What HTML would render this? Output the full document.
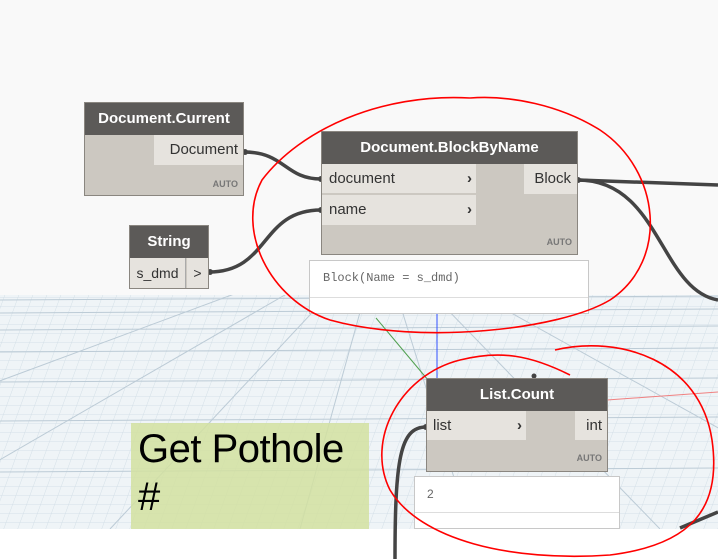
<!DOCTYPE html>
<html><head><style>
body{margin:0;width:718px;height:559px;overflow:hidden;background:#fff;font-family:"Liberation Sans",sans-serif;position:relative}
.a{position:absolute;box-sizing:border-box}
.node{background:#ccc8c1;border:1px solid #8a8680}
.hd{background:#5c5a58;color:#fff;font-weight:bold;font-size:15px;text-align:center}
.port{background:#e6e3de;color:#333;font-size:15px}
.auto{color:#777;font-size:9px;font-weight:bold}
.res{background:#fff;border:1px solid #c8c8c8}
</style></head><body>
<svg class="a" style="left:0;top:0" width="718" height="559">
<defs><clipPath id="g"><rect x="0" y="295" width="718" height="234"/></clipPath>
<pattern id="p" width="14" height="9" patternUnits="userSpaceOnUse" patternTransform="skewX(-20)"><path d="M0 0H14M0 0V9" stroke="#d3dfe7" stroke-width="1" fill="none"/></pattern></defs>
<rect x="0" y="0" width="718" height="296" fill="#f9f9f9"/>
<rect x="0" y="295" width="718" height="234" fill="#eff4f7"/>
<rect x="0" y="295" width="718" height="234" fill="url(#p)"/>
<g stroke="#bccbd6" stroke-width="1" clip-path="url(#g)">
<line x1="0" y1="300" x2="718" y2="296"/><line x1="0" y1="313" x2="718" y2="309"/>
<line x1="0" y1="330" x2="718" y2="326"/><line x1="0" y1="352" x2="718" y2="348"/>
<line x1="0" y1="382" x2="718" y2="378"/><line x1="0" y1="421" x2="718" y2="417"/>
<line x1="0" y1="472" x2="718" y2="468"/>
<line x1="380" y1="240" x2="-400" y2="529"/><line x1="380" y1="240" x2="-120" y2="529"/>
<line x1="380" y1="240" x2="110" y2="529"/><line x1="380" y1="240" x2="300" y2="529"/>
<line x1="380" y1="240" x2="470" y2="529"/><line x1="380" y1="240" x2="660" y2="529"/>
<line x1="380" y1="240" x2="900" y2="529"/>
</g>
<line x1="437" y1="313" x2="437" y2="380" stroke="#3050ff" stroke-width="1"/>
<line x1="376" y1="318" x2="428" y2="380" stroke="#50a050" stroke-width="1"/>
<line x1="607" y1="400" x2="718" y2="392" stroke="#f08080" stroke-width="1"/>
<g fill="none" stroke="#444" stroke-width="3.5">
<path d="M244 152 C285 152 285 179 321 179"/>
<path d="M209 272 C270 272 260 210 321 210"/>
<path d="M578 180 L718 185"/>
<path d="M578 180 C660 180 660 290 718 300"/>
<path d="M426 427 C400 427 395 460 395 559"/>
<path d="M680 528 L718 512"/>
</g>
<g fill="#444"><circle cx="245" cy="152" r="3"/><circle cx="321" cy="179" r="3"/><circle cx="321" cy="210" r="3"/><circle cx="210" cy="272" r="3"/><circle cx="578" cy="180" r="3"/><circle cx="426" cy="427" r="3"/><circle cx="534" cy="376" r="2.5"/></g>
</svg>
<div class="a node" style="left:84px;top:102px;width:160px;height:94px">
<div class="a hd" style="left:0;top:0;width:158px;height:32px;line-height:32px">Document.Current</div>
<div class="a port" style="left:69px;top:32px;width:89px;height:30px;line-height:30px;text-align:right;padding-right:5px">Document</div>
<div class="a auto" style="right:5px;top:76px">AUTO</div></div>
<div class="a node" style="left:321px;top:131px;width:257px;height:124px">
<div class="a hd" style="left:0;top:0;width:255px;height:32px;line-height:32px">Document.BlockByName</div>
<div class="a port" style="left:0;top:32px;width:154px;height:30px;line-height:30px;padding-left:7px;border-bottom:1px solid #ccc8c1">document<span style="position:absolute;right:4px;font-weight:bold">&#8250;</span></div>
<div class="a port" style="left:0;top:63px;width:154px;height:30px;line-height:30px;padding-left:7px">name<span style="position:absolute;right:4px;font-weight:bold">&#8250;</span></div>
<div class="a port" style="left:202px;top:32px;width:53px;height:30px;line-height:30px;text-align:right;padding-right:6px">Block</div>
<div class="a auto" style="right:5px;top:105px">AUTO</div></div>
<div class="a res" style="left:309px;top:260px;width:280px;height:54px"><div style="height:36px;border-bottom:1px solid #ddd;font:12px 'Liberation Mono',monospace;color:#666;line-height:34px;padding-left:13px">Block(Name = s_dmd)</div></div>
<div class="a node" style="left:129px;top:225px;width:80px;height:64px">
<div class="a hd" style="left:0;top:0;width:78px;height:32px;line-height:32px">String</div>
<div class="a port" style="left:0;top:32px;width:56px;height:30px;line-height:30px;text-align:center;font-size:14px;border-right:1px solid #aaa">s_dmd</div>
<div class="a port" style="left:57px;top:32px;width:21px;height:30px;line-height:30px;text-align:center;font-size:14px">&gt;</div></div>
<div class="a node" style="left:426px;top:378px;width:182px;height:94px">
<div class="a hd" style="left:0;top:0;width:180px;height:32px;line-height:32px">List.Count</div>
<div class="a port" style="left:0;top:32px;width:99px;height:29px;line-height:29px;padding-left:6px">list<span style="position:absolute;right:4px;font-weight:bold">&#8250;</span></div>
<div class="a port" style="left:148px;top:32px;width:32px;height:29px;line-height:29px;text-align:right;padding-right:5px">int</div>
<div class="a auto" style="right:5px;top:74px">AUTO</div></div>
<div class="a res" style="left:414px;top:476px;width:206px;height:53px"><div style="height:35px;border-bottom:1px solid #ddd;font-size:12px;color:#666;line-height:34px;padding-left:12px">2</div></div>
<div class="a" style="left:131px;top:423px;width:238px;height:106px;background:rgba(210,225,160,0.85);font-size:40px;color:#000;padding:2px 0 0 7px;line-height:48px;letter-spacing:-0.5px">Get Pothole<br>#</div>
<svg class="a" style="left:0;top:0" width="718" height="559"><g fill="none" stroke="#f00" stroke-width="1.6">
<path d="M470 98 C380 93 300 130 262 180 C235 230 270 300 330 320 C420 345 560 330 610 300 C670 260 660 170 600 130 C560 105 510 95 470 98"/>
<path d="M555 350 C620 335 700 360 712 440 C722 510 690 545 610 555 C510 562 420 540 390 490 C365 440 400 375 460 360 C500 350 530 355 570 375"/>
</g></svg>
</body></html>
